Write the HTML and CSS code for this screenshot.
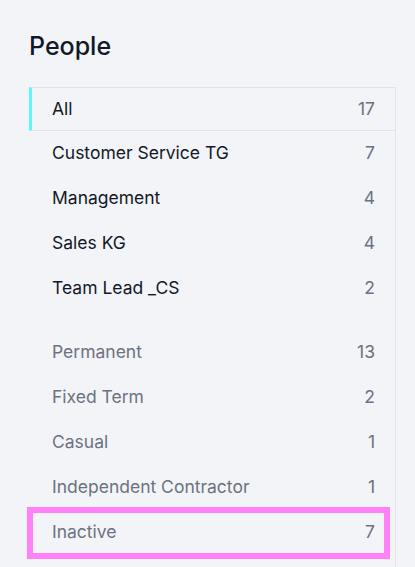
FILE: index.html
```html
<!DOCTYPE html>
<html lang="en">
<head>
  <meta charset="UTF-8">
  <meta name="viewport" content="width=device-width, initial-scale=1.0">
  <title>People</title>
  <link rel="stylesheet" href="styles.css">
</head>
<body>
  <div class="sidebar">
    <h1 class="sidebar-title">People</h1>

    <div class="filter-list">
      <!-- Teams -->
      <div class="filter-group">
        <div class="filter-item active"><span>All</span><span class="count">17</span></div>
        <div class="filter-item"><span>Customer Service TG</span><span class="count">7</span></div>
        <div class="filter-item"><span>Management</span><span class="count">4</span></div>
        <div class="filter-item"><span>Sales KG</span><span class="count">4</span></div>
        <div class="filter-item"><span>Team Lead _CS</span><span class="count">2</span></div>
      </div>

      <!-- Employment types -->
      <div class="filter-group muted">
        <div class="filter-item"><span>Permanent</span><span class="count">13</span></div>
        <div class="filter-item"><span>Fixed Term</span><span class="count">2</span></div>
        <div class="filter-item"><span>Casual</span><span class="count">1</span></div>
        <div class="filter-item"><span>Independent Contractor</span><span class="count">1</span></div>
        <div class="filter-item highlighted"><span>Inactive</span><span class="count">7</span></div>
      </div>
    </div>
  </div>
</body>
</html>
```

FILE: styles.css
```css
body {
  background-color: #f3f4f8;
  font-family: Inter, "Noto Sans", sans-serif;
  margin: 0;
  padding: 0;
}

.sidebar {
  margin-right: 19px;
  padding: 30px 0 0 29px;
}

.sidebar-title {
  margin: 0 0 25px 0;
  font-size: 25px;
  line-height: 32px;
  font-weight: 500;
  color: #111827;
}

.filter-list {
  border-right: 1px solid #e1e3e9;
  padding-bottom: 20px;
}

.filter-group + .filter-group {
  margin-top: 19px;
}

.filter-item {
  display: flex;
  justify-content: space-between;
  align-items: center;
  height: 43px;
  padding: 0 20px 2px 23px;
  font-size: 17.5px;
  color: #111827;
}

.filter-item .count {
  color: #6b7280;
}

.filter-item.active {
  height: 40px;
  padding-left: 20px;
  border-top: 1px solid #e1e3e9;
  border-bottom: 1px solid #e1e3e9;
  border-left: 3px solid #5ef6f6;
}

.muted .filter-item {
  color: #6b7280;
}

/* highlight box drawn over the row */
.filter-item.highlighted {
  position: relative;
}

.filter-item.highlighted::after {
  content: "";
  position: absolute;
  top: -3px;
  bottom: -4px;
  left: -2px;
  right: 5px;
  border: 6px solid #ff80f8;
}
```
